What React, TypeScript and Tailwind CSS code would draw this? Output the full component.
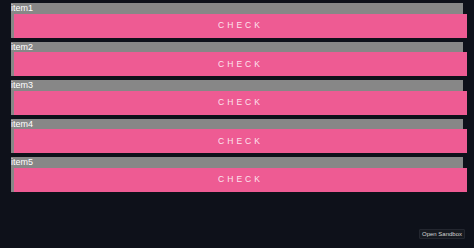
import React from 'react'

const items = ['item1', 'item2', 'item3', 'item4', 'item5']

function Item({ label }: { label: string }) {
  return (
    <div className="bg-[#878787]">
      <div className="h-[10.5px] text-[9px] leading-[10.5px] text-white">{label}</div>
      <button className="ml-[3px] block h-[24px] w-[calc(100%+1px)] bg-[#ee5b93] text-[8.5px] tracking-[3px] text-[#fde4ee] uppercase">
        Check
      </button>
    </div>
  )
}

export default function App() {
  return (
    <div className="relative h-[248px] w-full overflow-hidden bg-[#0e111a] font-['Liberation_Sans',Arial,sans-serif]">
      <div className="flex flex-col gap-[4px] px-[11px] pt-[3px]">
        {items.map((it) => (
          <Item key={it} label={it} />
        ))}
      </div>
      <button className="absolute right-[9px] bottom-[9px] h-[10px] rounded-[1px] border border-[#23262f] bg-[#161920] px-[2px] text-[6px] leading-[8px] text-[#d4d4d4]">
        Open Sandbox
      </button>
    </div>
  )
}
